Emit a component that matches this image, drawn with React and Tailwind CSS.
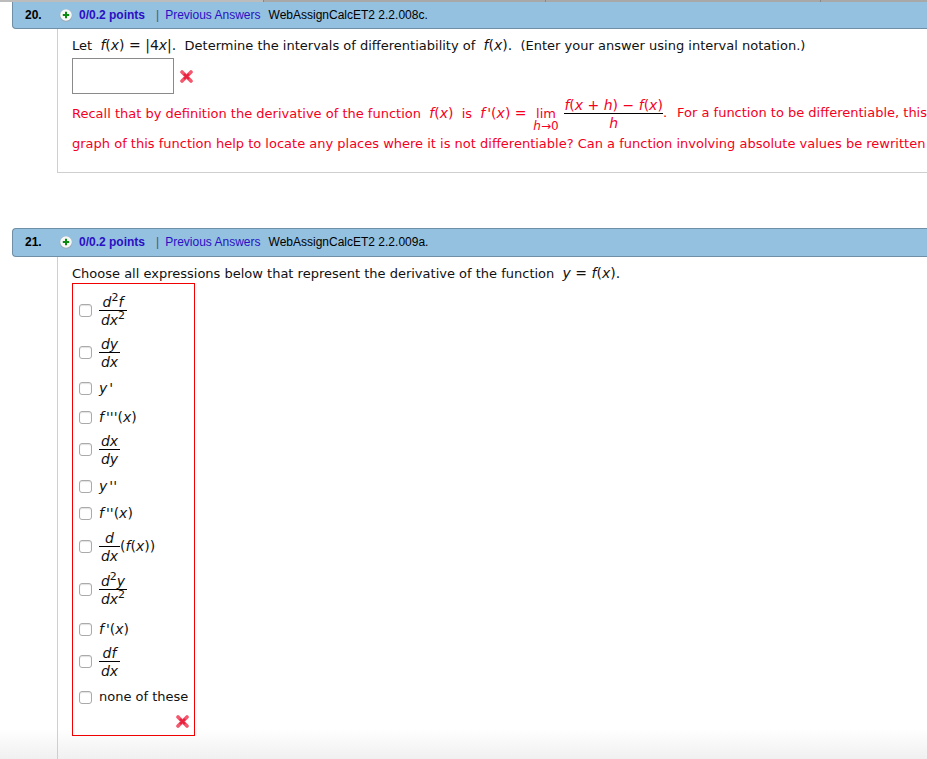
import React from 'react'

const I = ({ children }) => <i className="italic">{children}</i>
const M = ({ children }) => <span className="text-[14px]">{children}</span>
const Prime = ({ children }) => <i className="italic ml-[2px]">{children}</i>

const PlusIcon = () => (
  <svg width="14" height="14" viewBox="0 0 14 14" className="shrink-0">
    <circle cx="7" cy="7.5" r="6.2" fill="#9a9a9a" opacity="0.6" />
    <circle cx="7" cy="7" r="5.8" fill="#f7f7f7" />
    <path d="M7 3.8v6.4M3.8 7h6.4" stroke="#0b8a12" strokeWidth="2" />
  </svg>
)

const RedX = () => (
  <svg width="13" height="13" viewBox="0 0 13 13" className="shrink-0">
    <path d="M2 2l9 9M11 2l-9 9" stroke="#f3586e" strokeWidth="3.6" strokeLinecap="round" />
    <path d="M4 4l5 5M9 4l-5 5" stroke="#e8213f" strokeWidth="2.4" />
  </svg>
)

const Header = ({ num, code, cls }) => (
  <div className={`ml-3 flex items-center bg-[#94c1e0] border-b border-l border-[#6f8fa6] ${cls} font-['Liberation_Sans',sans-serif] text-xs`}>
    <b className="w-[46px] pl-[12px] text-black">{num}.</b>
    <PlusIcon />
    <b className="ml-[6px] text-[#2b0fc4]">0/0.2 points</b>
    <span className="ml-[11px] text-[#555]">|</span>
    <span className="ml-[6px] text-[#2b0fc4]">Previous Answers</span>
    <span className="ml-2 text-black">WebAssignCalcET2 2.2.{code}.</span>
  </div>
)

const Frac = ({ top, bottom, w = 'w-[21px]' }) => (
  <span className={`inline-flex flex-col items-center ${w} text-[14px]`}>
    <span className="h-[17px] leading-[19px] whitespace-nowrap">{top}</span>
    <span className="h-[18px] leading-[18px] w-full border-t border-black text-center whitespace-nowrap">{bottom}</span>
  </span>
)

const Sup = ({ children }) => <sup className="text-[11px] not-italic">{children}</sup>

const choices = [
  { mt: 'mt-0', h: 'h-9', c: <Frac w="w-[28px]" top={<><I>d</I><Sup>2</Sup><I>f</I></>} bottom={<><I>dx</I><Sup>2</Sup></>} /> },
  { mt: 'mt-[6px]', h: 'h-9', c: <Frac top={<I>dy</I>} bottom={<I>dx</I>} /> },
  { mt: 'mt-2', h: 'h-5', c: <M><I>y</I><Prime>'</Prime></M> },
  { mt: 'mt-[9px]', h: 'h-5', c: <M><I>f</I><Prime>'''</Prime>(<I>x</I>)</M> },
  { mt: 'mt-1', h: 'h-9', c: <Frac top={<I>dx</I>} bottom={<I>dy</I>} /> },
  { mt: 'mt-[9px]', h: 'h-5', c: <M><I>y</I><Prime>''</Prime></M> },
  { mt: 'mt-[7px]', h: 'h-5', c: <M><I>f</I><Prime>''</Prime>(<I>x</I>)</M> },
  { mt: 'mt-[5px]', h: 'h-9', c: <span className="flex items-center"><Frac top={<I>d</I>} bottom={<I>dx</I>} /><M>(<I>f</I>(<I>x</I>))</M></span> },
  { mt: 'mt-[7px]', h: 'h-9', c: <Frac w="w-[28px]" top={<><I>d</I><Sup>2</Sup><I>y</I></>} bottom={<><I>dx</I><Sup>2</Sup></>} /> },
  { mt: 'mt-3', h: 'h-5', c: <M><I>f</I><Prime>'</Prime>(<I>x</I>)</M> },
  { mt: 'mt-1', h: 'h-9', c: <Frac top={<I>df</I>} bottom={<I>dx</I>} /> },
  { mt: 'mt-2', h: 'h-5', c: <span>none of these</span> },
]

export default function App() {
  return (
    <div className="w-[927px] h-[759px] overflow-hidden bg-linear-to-b from-white from-[96%] to-[#f0f0f0] font-['DejaVu_Sans',sans-serif] text-[13px] text-[#111]">
      <div className="h-[2px] flex bg-[#a8a8a8]">
        <div className="w-[263px] bg-[#bcbcbc]" />
        <div className="w-[282px] border-l border-[#888]" />
        <div className="w-[275px] border-l border-[#888]" />
        <div className="flex-1 border-l border-[#888]" />
      </div>

      <Header num="20" code="008c" cls="h-[27px] rounded-bl-[4px]" />
      <div className="ml-[57px] h-[144px] border-l border-b border-[#cfcfcf] pl-[14px] pt-[7px] whitespace-nowrap">
        <div className="h-[18px] leading-[18px]">
          Let&nbsp; <M><I>f</I>(<I>x</I>) = |4<I>x</I>|.</M>&nbsp; Determine the intervals of differentiability of&nbsp; <M><I>f</I>(<I>x</I>).</M>&nbsp; (Enter your answer using interval notation.)
        </div>
        <div className="mt-1 flex items-center gap-[6px]">
          <input className="w-[102px] h-[36px] border border-[#8a8a8a] bg-white" />
          <RedX />
        </div>
        <div className="mt-[2px] h-[34px] flex items-center text-[#f4001e]">
          <span>Recall that by definition the derivative of the function&nbsp; <M><I>f</I>(<I>x</I>)</M>&nbsp; is&nbsp; <M><I>f</I><Prime>'</Prime>(<I>x</I>) =</M></span>
          <span className="ml-[5px] inline-flex flex-col items-center w-[31px] pt-[10px]">
            <span className="leading-[15px]">lim</span>
            <span className="text-xs leading-[10px] whitespace-nowrap"><I>h</I>→0</span>
          </span>
          <span className="ml-1 inline-flex flex-col items-center w-[102px] text-[14px]">
            <span className="h-[17px] leading-[19px]"><I>f</I>(<I>x</I> + <I>h</I>) − <I>f</I>(<I>x</I>)</span>
            <span className="h-[18px] leading-[18px] w-full border-t border-black text-center"><I>h</I></span>
          </span>
          <span>.</span>
          <span className="ml-[10px]">For a function to be differentiable, this</span>
        </div>
        <div className="mt-[5px] leading-[18px] text-[#f4001e]">
          graph of this function help to locate any places where it is not differentiable? Can a function involving absolute values be rewritten
        </div>
      </div>

      <div className="mt-[55px]">
        <Header num="21" code="009a" cls="h-[29px] pb-[1px] rounded-l-[4px] border-t" />
      </div>
      <div className="ml-[57px] h-[502px] border-l border-[#cfcfcf] pl-[14px] pt-[7px]">
        <div className="h-[18px] leading-[18px] whitespace-nowrap">
          Choose all expressions below that represent the derivative of the function&nbsp; <M><I>y</I> = <I>f</I>(<I>x</I>).</M>
        </div>
        <div className="mt-[1px] w-[123px] h-[453px] border border-[#f00000] pl-[6px] pt-2">
          {choices.map((row, i) => (
            <div key={i} className={`flex items-center ${row.mt} ${row.h}`}>
              <input type="checkbox" className="appearance-none shrink-0 w-[13px] h-[13px] rounded-[3px] border border-[#aaaaaa] bg-white shadow-[inset_0_1px_1px_#e2e2e2]" />
              <span className="ml-[7px] whitespace-nowrap">{row.c}</span>
            </div>
          ))}
          <div className="mt-2 flex justify-end pr-[5px]">
            <RedX />
          </div>
        </div>
      </div>
    </div>
  )
}
